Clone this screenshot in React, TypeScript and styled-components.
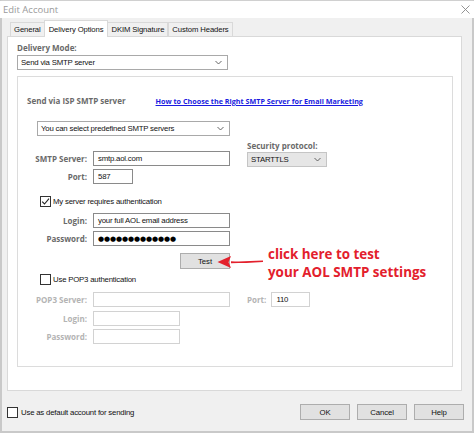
import React from "react"
import styled, { createGlobalStyle } from "styled-components"

const GlobalStyle = createGlobalStyle`
  html, body { margin: 0; padding: 0; background: #ffffff; }
  body { font-family: "Liberation Sans", Arial, sans-serif; }
  * { box-sizing: border-box; }
`

const Window = styled.div`
  width: 474px;
  height: 433px;
  background: #f0f0f0;
  border: 2px solid #c9c9c9;
  border-top: 1px solid #d0d0d0;
  display: flex;
  flex-direction: column;
`

const TitleBar = styled.div`
  height: 17px;
  background: #ffffff;
  display: flex;
  align-items: center;
  justify-content: space-between;
  padding: 0 4px 0 3px;
  margin: 0 -2px;
  font-family: "Open Sans", sans-serif;
  font-size: 9.5px;
  color: #9a9a9a;
`

const CloseIcon = styled.svg`
  width: 9px;
  height: 9px;
`

const Body = styled.div`
  flex: 1;
  display: flex;
  flex-direction: column;
  padding: 2px 10px 0 5px;
`

const TabStrip = styled.div`
  display: flex;
  align-items: flex-end;
  height: 17px;
  padding-left: 3px;
`

const Tab = styled.div<{ $active?: boolean }>`
  height: ${(p) => (p.$active ? "17px" : "15px")};
  padding: 0 ${(p) => (p.$active ? "4px" : "3px")};
  margin: 0 ${(p) => (p.$active ? "-1px" : "0")};
  position: relative;
  z-index: ${(p) => (p.$active ? 2 : 1)};
  background: ${(p) => (p.$active ? "#ffffff" : "#f0f0f0")};
  border: 1px solid #d9d9d9;
  border-bottom: ${(p) => (p.$active ? "none" : "1px solid #d9d9d9")};
  font-size: 7.7px;
  letter-spacing: -0.1px;
  color: #111;
  display: flex;
  align-items: center;
  white-space: nowrap;
`

const Panel = styled.div`
  height: 355px;
  background: #ffffff;
  border: 1px solid #d9d9d9;
  margin-top: -1px;
  padding: 6px 9px 0 9px;
  display: flex;
  flex-direction: column;
`

const BoldLabel = styled.div<{ $disabled?: boolean }>`
  font-family: "Open Sans", sans-serif;
  font-weight: 700;
  font-size: 8px;
  color: ${(p) => (p.$disabled ? "#b4b4b4" : "#6a6a6a")};
  white-space: nowrap;
  line-height: 10px;
`

const Select = styled.div<{ $width: number; $grey?: boolean }>`
  width: ${(p) => p.$width}px;
  height: 15px;
  background: ${(p) => (p.$grey ? "#e6e6e6" : "#ffffff")};
  border: 1px solid ${(p) => (p.$grey ? "#c5c5c5" : "#a9a9a9")};
  display: flex;
  align-items: center;
  justify-content: space-between;
  padding: 0 5px 0 3px;
  font-size: 7.8px;
  letter-spacing: -0.2px;
  color: #111;
  white-space: nowrap;
`

const Chevron = () => (
  <svg width="7" height="5" viewBox="0 0 7 5">
    <path d="M0.5 1 L3.5 4 L6.5 1" fill="none" stroke="#555" strokeWidth="0.9" />
  </svg>
)

const Group = styled.div`
  margin-top: 6px;
  margin-right: -1px;
  height: 291px;
  border: 1px solid #dcdcdc;
  padding: 19px 0 0 9px;
  display: flex;
  flex-direction: column;
`

const GroupHeader = styled.div`
  display: flex;
  align-items: center;
  height: 10px;
  gap: 30px;
`

const HelpLink = styled.a`
  font-family: "Open Sans", sans-serif;
  font-weight: 700;
  font-size: 7.2px;
  color: #1a1ae0;
  text-decoration: underline;
  white-space: nowrap;
`

const Indented = styled.div<{ $top: number; $left?: number }>`
  margin-top: ${(p) => p.$top}px;
  margin-left: ${(p) => p.$left ?? 0}px;
  display: flex;
`

const ServerBlock = styled.div`
  margin-top: 5px;
  display: flex;
  gap: 17px;
`

const FieldGrid = styled.div<{ $top?: number }>`
  margin-top: ${(p) => p.$top ?? 0}px;
  display: grid;
  grid-template-columns: 60px auto;
  column-gap: 6px;
  row-gap: 3px;
  align-items: center;
`

const FieldLabel = styled(BoldLabel)`
  text-align: right;
`

const Input = styled.div<{ $width: number; $disabled?: boolean }>`
  width: ${(p) => p.$width}px;
  height: 15px;
  border: 1px solid ${(p) => (p.$disabled ? "#d2d2d2" : "#8a8a8a")};
  background: #ffffff;
  font-size: 7.8px;
  letter-spacing: -0.2px;
  color: #111;
  padding: 0 4px;
  display: flex;
  align-items: center;
  white-space: nowrap;
`

const Dots = styled.span`
  font-family: "DejaVu Sans", sans-serif;
  font-size: 7px;
  letter-spacing: -0.1px;
  color: #000;
`

const SecurityColumn = styled.div`
  display: flex;
  flex-direction: column;
  gap: 1px;
`

const CheckRow = styled.label<{ $top: number; $left?: number }>`
  margin-top: ${(p) => p.$top}px;
  margin-left: ${(p) => p.$left ?? 13}px;
  display: flex;
  align-items: center;
  gap: 2px;
  font-size: 7.8px;
  letter-spacing: -0.2px;
  color: #111;
  white-space: nowrap;
  height: 12px;
`

const Box = styled.span`
  width: 11px;
  height: 11px;
  border: 1px solid #333;
  background: #fff;
  display: inline-flex;
  align-items: center;
  justify-content: center;
`

const Check = ({ checked }: { checked?: boolean }) => (
  <Box>
    {checked && (
      <svg width="9" height="9" viewBox="0 0 9 9">
        <path d="M1.2 4.6 L3.5 7 L8 1.6" fill="none" stroke="#222" strokeWidth="1.1" />
      </svg>
    )}
  </Box>
)

const TestRow = styled.div`
  margin-top: 7px;
  margin-left: 153px;
  position: relative;
  height: 17px;
`

const Button = styled.div<{ $width: number }>`
  width: ${(p) => p.$width}px;
  height: 16px;
  background: #e1e1e1;
  border: 1px solid #adadad;
  font-size: 7.8px;
  letter-spacing: -0.1px;
  color: #111;
  display: flex;
  align-items: center;
  justify-content: center;
`

const Annotation = styled.div`
  position: absolute;
  left: 37px;
  top: -8px;
  display: flex;
  align-items: flex-start;
  gap: 3px;
`

const Arrow = styled.svg`
  margin-top: 10px;
  width: 48px;
  height: 14px;
`

const Callout = styled.div`
  font-family: "Open Sans", sans-serif;
  font-weight: 700;
  font-size: 13.4px;
  line-height: 18px;
  color: #e3202c;
  white-space: nowrap;
  text-shadow: 0 0 1px #fff;
`

const PopBlock = styled.div`
  margin-top: 7px;
  display: flex;
  flex-direction: column;
`

const PopServerRow = styled.div`
  display: flex;
  align-items: center;
  gap: 17px;
`

const InlineField = styled.div`
  display: flex;
  align-items: center;
  gap: 5px;
`

const Footer = styled.div`
  height: 37px;
  display: flex;
  align-items: center;
  justify-content: space-between;
  padding: 5px 0 0 0;
`

const FooterCheck = styled(CheckRow)`
  margin: 0;
  gap: 3px;
`

const Buttons = styled.div`
  display: flex;
  gap: 7px;
  margin-right: -2px;
`

export default function App() {
  return (
    <>
      <GlobalStyle />
      <Window>
        <TitleBar>
          <span>Edit Account</span>
          <CloseIcon viewBox="0 0 9 9">
            <path d="M0.5 0.5 L8.5 8.5 M8.5 0.5 L0.5 8.5" stroke="#888" strokeWidth="0.9" />
          </CloseIcon>
        </TitleBar>
        <Body>
          <TabStrip>
            <Tab>General</Tab>
            <Tab $active>Delivery Options</Tab>
            <Tab>DKIM Signature</Tab>
            <Tab>Custom Headers</Tab>
          </TabStrip>
          <Panel>
            <BoldLabel>Delivery Mode:</BoldLabel>
            <Indented $top={2}>
              <Select $width={211}>
                <span>Send via SMTP server</span>
                <Chevron />
              </Select>
            </Indented>
            <Group>
              <GroupHeader>
                <BoldLabel>Send via ISP SMTP server</BoldLabel>
                <HelpLink href="#">How to Choose the Right SMTP Server for Email Marketing</HelpLink>
              </GroupHeader>
              <Indented $top={15} $left={10}>
                <Select $width={193}>
                  <span>You can select predefined SMTP servers</span>
                  <Chevron />
                </Select>
              </Indented>
              <ServerBlock>
                <FieldGrid $top={10}>
                  <FieldLabel>SMTP Server:</FieldLabel>
                  <Input $width={137}>smtp.aol.com</Input>
                  <FieldLabel>Port:</FieldLabel>
                  <Input $width={40}>587</Input>
                </FieldGrid>
                <SecurityColumn>
                  <BoldLabel>Security protocol:</BoldLabel>
                  <Select $width={80} $grey>
                    <span>STARTTLS</span>
                    <Chevron />
                  </Select>
                </SecurityColumn>
              </ServerBlock>
              <CheckRow $top={11}>
                <Check checked />
                My server requires authentication
              </CheckRow>
              <FieldGrid $top={6}>
                <FieldLabel>Login:</FieldLabel>
                <Input $width={137}>your full AOL email address</Input>
                <FieldLabel>Password:</FieldLabel>
                <Input $width={137}>
                  <Dots>●●●●●●●●●●●●●</Dots>
                </Input>
              </FieldGrid>
              <TestRow>
                <Button $width={50}>Test</Button>
                <Annotation>
                  <Arrow viewBox="0 0 48 14">
                    <path d="M14 6.3 C24 6.8 34 6.2 46 5.6 L46 7 C34 7.8 24 8.2 14 8.2 Z" fill="#e3202c" />
                    <path d="M0.5 7 L14 1 L11.5 7.2 L14 13 Z" fill="#e3202c" />
                  </Arrow>
                  <Callout>
                    click here to test
                    <br />
                    your AOL SMTP settings
                  </Callout>
                </Annotation>
              </TestRow>
              <CheckRow $top={3}>
                <Check />
                Use POP3 authentication
              </CheckRow>
              <PopBlock>
                <PopServerRow>
                  <FieldGrid>
                    <FieldLabel $disabled>POP3 Server:</FieldLabel>
                    <Input $width={137} $disabled />
                  </FieldGrid>
                  <InlineField>
                    <BoldLabel $disabled>Port:</BoldLabel>
                    <Input $width={39} $disabled>110</Input>
                  </InlineField>
                </PopServerRow>
                <FieldGrid $top={4}>
                  <FieldLabel $disabled>Login:</FieldLabel>
                  <Input $width={87} $disabled />
                  <FieldLabel $disabled>Password:</FieldLabel>
                  <Input $width={87} $disabled />
                </FieldGrid>
              </PopBlock>
            </Group>
          </Panel>
          <Footer>
            <FooterCheck $top={0}>
              <Check />
              Use as default account for sending
            </FooterCheck>
            <Buttons>
              <Button $width={50}>OK</Button>
              <Button $width={50}>Cancel</Button>
              <Button $width={50}>Help</Button>
            </Buttons>
          </Footer>
        </Body>
      </Window>
    </>
  )
}
